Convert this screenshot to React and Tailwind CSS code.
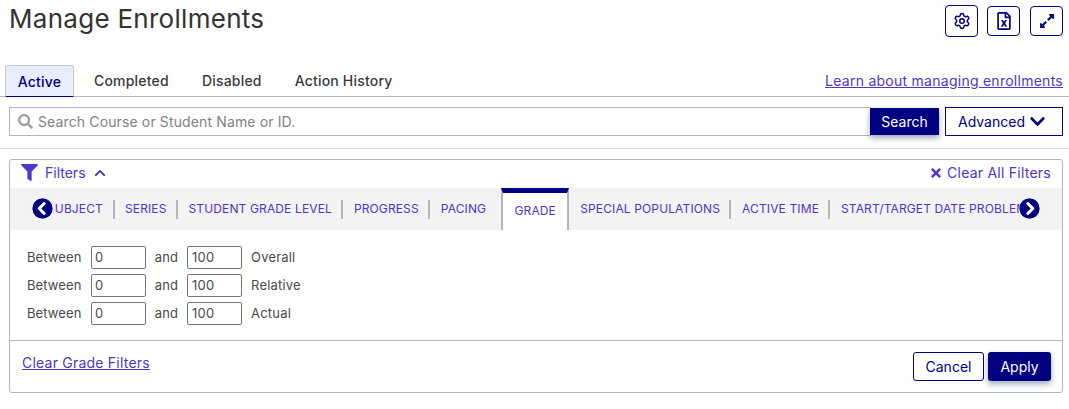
import { Settings } from 'lucide-react';
import {
    FaChevronCircleLeft,
    FaChevronCircleRight,
    FaChevronDown,
    FaChevronUp,
    FaExpandAlt,
    FaFilter,
    FaRegFileExcel,
    FaSearch,
    FaTimes,
} from 'react-icons/fa';

const tabs = ['Active', 'Completed', 'Disabled', 'Action History'];
const gradeRows = ['Overall', 'Relative', 'Actual'];

function IconButton({ children, className }) {
    return (
        <button className={`flex w-[33px] items-center justify-center rounded-[4px] border border-[#000080] text-[#000080] ${className}`}>
            {children}
        </button>
    );
}

function Divider() {
    return <span className="h-[19px] w-[2px] shrink-0 bg-[#b5b5b5]" />;
}

export default function App() {
    return (
        <div className="h-[409px] w-[1069px] overflow-hidden bg-white font-['Inter',sans-serif] text-[#3a3a3a]">
            {/* Header */}
            <div className="flex h-[65px] items-start justify-between pl-[9px] pr-[6px]">
                <h1 className="pt-[2px] text-[26px] leading-[34px] tracking-[0.28px] text-[#333333]">Manage Enrollments</h1>
                <div className="flex items-center pt-[5px]">
                    <IconButton className="mr-[9px] h-[32px]"><Settings size={18} strokeWidth={2} /></IconButton>
                    <IconButton className="mr-[10px] h-[30px]"><FaRegFileExcel size={18} /></IconButton>
                    <IconButton className="h-[30px]"><FaExpandAlt size={16} /></IconButton>
                </div>
            </div>

            {/* Tabs */}
            <div className="flex h-[32px] items-stretch justify-between border-b border-[#b5b5b5] pl-[5px] pr-[6px]">
                <div className="flex text-[14px] font-medium tracking-[0.2px]">
                    {tabs.map((tab, i) => (
                        <div
                            key={tab}
                            className={i === 0
                                ? 'mb-[-1px] flex w-[69px] items-center justify-center rounded-t-[3px] border border-[#c4c9d6] border-b-[#000080] bg-[#e8edfb] text-[#000080]'
                                : 'flex items-center pl-[20px] pr-[13px]'}
                        >
                            {tab}
                        </div>
                    ))}
                </div>
                <a href="#" className="pt-[5px] text-[14px] tracking-[0.26px] text-[#4f35c9] underline">Learn about managing enrollments</a>
            </div>

            {/* Search */}
            <div className="flex h-[52px] border-b border-[#dedede] pl-[9px] pr-[6px] pt-[10px]">
                <div className="flex h-[29px] w-[862px] items-center border border-[#b5b5b5] pb-[1px] pl-[8px]">
                    <FaSearch size={15} className="text-[#a3a3a3]" />
                    <span className="ml-[5px] text-[14px] tracking-[0.13px] text-[#828282]">Search Course or Student Name or ID.</span>
                </div>
                <button className="ml-[-1px] mt-[1px] h-[27px] w-[69px] self-start bg-[#000080] pb-[1px] text-[14px] text-white shadow-[0_3px_6px_rgba(40,60,90,0.45)]">Search</button>
                <button className="ml-[6px] flex h-[29px] w-[118px] items-center gap-[4px] border border-[#000080] pb-[1px] pl-[12px] text-[14px] text-[#000080]">
                    Advanced <FaChevronDown size={17} />
                </button>
            </div>

            {/* Filters panel */}
            <div className="ml-[9px] mr-[6px] mt-[10px] h-[234px] rounded-[3px] border border-[#b5b5b5]">
                <div className="flex h-[28px] items-center justify-between px-[11px] pb-[3px] text-[14px] text-[#4f35c9]">
                    <div className="flex items-center">
                        <FaFilter size={17} className="mt-[-1px]" />
                        <span className="ml-[7px]">Filters</span>
                        <FaChevronUp size={12} className="ml-[8px]" />
                    </div>
                    <div className="flex items-center gap-[4px]">
                        <FaTimes size={14} />
                        <span className="tracking-[0.24px]">Clear All Filters</span>
                    </div>
                </div>

                {/* Filter categories */}
                <div className="relative h-[42px] bg-[#f3f3f3] pl-[44px] pr-[41px] text-[12px] tracking-[0.13px] text-[#4f35c9]">
                    <div className="flex h-full items-center overflow-hidden whitespace-nowrap">
                        <span className="ml-[-7px] shrink-0 pr-[10px]">SUBJECT</span>
                        <Divider />
                        <span className="shrink-0 pl-[10px] pr-[9px]">SERIES</span>
                        <Divider />
                        <span className="shrink-0 pl-[11px] pr-[9px]">STUDENT GRADE LEVEL</span>
                        <Divider />
                        <span className="shrink-0 pl-[11px] pr-[9px]">PROGRESS</span>
                        <Divider />
                        <span className="shrink-0 pl-[11px] pr-[15px]">PACING</span>
                        <div className="flex h-full w-[68px] shrink-0 items-center justify-center border-x-2 border-t-[5px] border-x-[#b5b5b5] border-t-[#000080] bg-white pb-[1px]">GRADE</div>
                        <span className="shrink-0 pl-[11px] pr-[9px]">SPECIAL POPULATIONS</span>
                        <Divider />
                        <span className="shrink-0 pl-[11px] pr-[9px]">ACTIVE TIME</span>
                        <Divider />
                        <span className="shrink-0 pl-[11px]">START/TARGET DATE PROBLEMS</span>
                    </div>
                    <FaChevronCircleLeft size={21} className="absolute left-[22px] top-[10px] rounded-full bg-white text-[#000080]" />
                    <FaChevronCircleRight size={21} className="absolute left-[1009px] top-[10px] rounded-full bg-white text-[#000080]" />
                </div>

                {/* Grade filters */}
                <div className="flex h-[111px] flex-col border-b border-[#b5b5b5] pl-[16px] pt-[16px] text-[13px] tracking-[0.2px] text-[#4a4a4a]">
                    {gradeRows.map((row) => (
                        <div key={row} className="mb-[5px] flex h-[23px] items-center">
                            <span className="w-[65px] pl-[1px] tracking-[0.1px]">Between</span>
                            <div className="flex h-[23px] w-[55px] items-center rounded-[2px] border border-[#767676] pl-[3px]">0</div>
                            <span className="w-[41px] text-center">and</span>
                            <div className="flex h-[23px] w-[55px] items-center rounded-[2px] border border-[#767676] pl-[4px]">100</div>
                            <span className="ml-[9px]">{row}</span>
                        </div>
                    ))}
                </div>

                {/* Footer */}
                <div className="flex items-start justify-between pl-[12px] pr-[11px] pt-[11px]">
                    <a href="#" className="text-[14px] tracking-[0.22px] text-[#4f35c9] underline">Clear Grade Filters</a>
                    <div className="flex gap-[4px] text-[14px]">
                        <button className="h-[29px] w-[71px] rounded-[3px] border border-[#000080] pb-[1px] text-[#000080]">Cancel</button>
                        <button className="h-[29px] w-[63px] rounded-[3px] bg-[#000080] pb-[1px] text-white shadow-[0_3px_6px_rgba(40,60,90,0.45)]">Apply</button>
                    </div>
                </div>
            </div>
        </div>
    );
}
